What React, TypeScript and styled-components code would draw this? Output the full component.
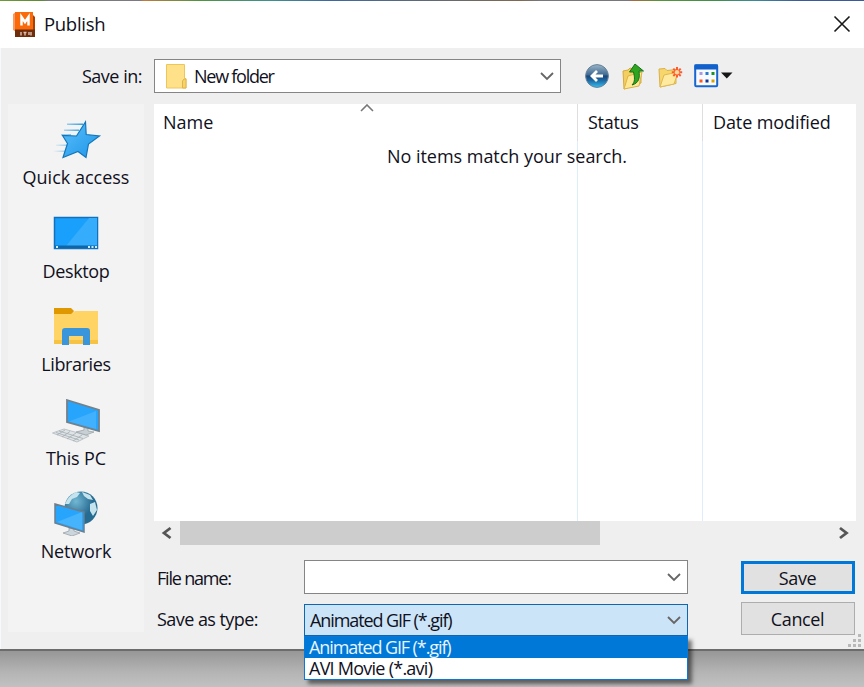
import React from "react";
import styled, { createGlobalStyle } from "styled-components";

const GlobalStyle = createGlobalStyle`
  * { box-sizing: border-box; }
  body {
    margin: 0;
    overflow: hidden;
    font-family: "Open Sans", "Noto Sans", sans-serif;
    font-size: 18px;
    color: #10101c;
  }
  button, input { font: inherit; color: inherit; }
  svg { display: block; flex: none; }
`;

const Backdrop = styled.div`
  width: 864px;
  height: 687px;
  padding-top: 1px;
  overflow: hidden;
  background:
    linear-gradient(90deg, #6f9a3a 0, #5d8a33 40px, #7c7a80 50px, #7c7a80 140px, #c07a3c 144px, #4f9440 200px, #3f9090 270px, #3d68a0 330px, #806a50 520px, #77777c 540px, #77777c 628px, #a86a3c 634px, #55943a 660px, #3f8f48 715px, #3b8a9a 755px, #3b5a9c 800px, #3b5a9c 100%) 0 0 / 100% 2px no-repeat,
    linear-gradient(180deg, #979797 651px, #b4b4b4 672px, #c1c1c1 687px);
`;

const Dialog = styled.main`
  height: 650px;
  display: flex;
  flex-direction: column;
  background: #efefef;
  border-bottom: 2px solid #6c6c6c;
  box-shadow: inset 1px 0 #f8f9fc;
`;

const TitleBar = styled.header`
  height: 47px;
  flex: none;
  display: flex;
  align-items: center;
  padding: 0 13px 2px 12px;
  background: #fff;
`;

const Label = styled.span<{ $spacing?: number }>`
  white-space: nowrap;
  line-height: 24px;
  letter-spacing: ${(p) => p.$spacing ?? 0}px;
`;

const Title = styled.h1`
  flex: 1;
  margin: 0 0 0 7px;
  font-size: 18.5px;
  font-weight: 400;
  line-height: 24px;
  letter-spacing: -0.3px;
`;

const IconButton = styled.button`
  padding: 0;
  border: 0;
  background: none;
`;

const Toolbar = styled.div`
  height: 56px;
  flex: none;
  display: flex;
  align-items: center;
  padding-left: 82px;
`;

const LookInLabel = styled.label`
  width: 72px;
  padding-bottom: 1px;
  line-height: 24px;
  white-space: nowrap;
  letter-spacing: -0.5px;
`;

const Combo = styled.div<{ $width: number; $height: number; $open?: boolean }>`
  width: ${(p) => p.$width}px;
  height: ${(p) => p.$height}px;
  display: flex;
  align-items: center;
  padding: 0 5px 0 ${(p) => (p.$open ? 5 : 10)}px;
  border: ${(p) => (p.$open ? "1.5px solid #1166b0" : "1.5px solid #858585")};
  background: ${(p) => (p.$open ? "#cce4f7" : "#fff")};
`;

const ComboText = styled.span<{ $spacing: number; $indent?: number }>`
  flex: 1;
  white-space: nowrap;
  line-height: 24px;
  padding-bottom: 1px;
  letter-spacing: ${(p) => p.$spacing}px;
  margin-left: ${(p) => p.$indent ?? 0}px;
`;

const Tools = styled.nav`
  display: flex;
  align-items: center;
  gap: 11px;
  margin-left: 23px;
`;

const Body = styled.div`
  display: flex;
  flex: 1;
  padding-left: 8px;
`;

const Places = styled.aside`
  width: 136px;
  height: 528px;
  display: flex;
  flex-direction: column;
  background: #f3f3f3;
`;

const Place = styled.div<{ $gap: number }>`
  height: 93.6px;
  flex: none;
  display: flex;
  flex-direction: column;
  align-items: center;
  justify-content: flex-end;
  gap: ${(p) => p.$gap}px;
  &:first-child { height: 85px; }
`;

const Main = styled.section`
  width: 702px;
  margin-left: 10px;
`;

const FileList = styled.div`
  position: relative;
  height: 417px;
  display: grid;
  grid-template-columns: 424px 125px 1fr;
  background: #fff;
`;

const Column = styled.div<{ $pad: number }>`
  padding: 6px 0 0 ${(p) => p.$pad}px;
  border-right: 1px solid;
  border-image: linear-gradient(180deg, #dedede 38px, #deedfa 38px) 1;
  &:last-of-type { border-right: 0; }
`;

const SortMark = styled.svg`
  position: absolute;
  left: 206px;
  top: 0;
`;

const EmptyMessage = styled.p`
  position: absolute;
  left: 0;
  right: 0;
  top: 40px;
  padding-left: 4px;
  margin: 0;
  text-align: center;
  line-height: 24px;
  letter-spacing: -0.03px;
`;

const ScrollBar = styled.div`
  height: 24px;
  display: flex;
  align-items: center;
  padding-left: 6px;
`;

const Thumb = styled.div`
  width: 420px;
  height: 24px;
  margin: 0 237px 0 6px;
  background: #cdcdcd;
`;

const Form = styled.form`
  display: grid;
  grid-template-columns: 147px 384px 167px;
  padding: 15px 0 0 3px;
`;

const Fields = styled.div`
  display: flex;
  flex-direction: column;
  gap: 10px;
`;

const Captions = styled.div`
  display: flex;
  flex-direction: column;
  gap: 17px;
  padding-top: 6px;
`;

const Buttons = styled.div`
  display: flex;
  flex-direction: column;
  gap: 8px;
  margin-left: 53px;
  padding-top: 1px;
`;

const Button = styled.button<{ $primary?: boolean }>`
  width: 114px;
  height: 33px;
  padding: 0 1px 0 0;
  line-height: 24px;
  letter-spacing: -0.4px;
  border: ${(p) => (p.$primary ? "3px solid #0078d7" : "1.5px solid #adadad")};
  background: #e1e1e1;
`;

const TypeField = styled.div`
  position: relative;
  height: 32px;
`;

const Menu = styled.ul`
  position: absolute;
  top: 32px;
  left: 0;
  width: 384px;
  height: 44px;
  margin: 0;
  padding: 0;
  list-style: none;
  border: 1px solid #0a78d4;
  background: #fff;
  box-shadow: 4px 4px 4px rgba(0, 0, 0, 0.5);
`;

const Option = styled.li<{ $selected?: boolean; $spacing: number }>`
  height: 21px;
  padding-left: 4px;
  line-height: 21px;
  white-space: nowrap;
  letter-spacing: ${(p) => p.$spacing}px;
  color: ${(p) => (p.$selected ? "#e8f4ff" : "inherit")};
  background: ${(p) => (p.$selected ? "#0078d7" : "#fff")};
`;

const Grip = styled.svg`
  position: absolute;
  left: 848px;
  top: 633px;
`;

const Chevron = () => (
  <svg width="16" height="10" viewBox="0 0 16 10">
    <path d="M2 2l6 6 6-6" fill="none" stroke="#666" strokeWidth="1.800" />
  </svg>
);

const AppIcon = () => (
  <svg width="25" height="26" viewBox="0 0 25 26">
    <path d="M1 3L4 1v20l-3-2z" fill="#f79a62" />
    <path d="M3 1h18v18H3z" fill="#fb6a08" />
    <path d="M21 4l2 2v19h-2z" fill="#a5410a" />
    <path d="M3 18.500h20V26H3z" fill="#702d0b" />
    <path d="M9.500 14.500V6l3.500 5 3.500-5v8.500" fill="none" stroke="#fff" strokeWidth="2.500" />
    <path d="M9 21v3.500M11.500 21.500h3M13 21v3.500M17 21v3M19 21v3.500" stroke="#dcc3b6" strokeWidth="1.400" />
  </svg>
);

const FolderSmall = () => (
  <svg width="22" height="27" viewBox="0 0 22 27">
    <path d="M1.500 1.500h18v14h1.500v9.500H1.500z" fill="#ffe18a" stroke="#edc65a" />
    <path d="M17.500 25v-7l1.500-2h2v9z" fill="#f7d36c" stroke="#dfb44c" />
  </svg>
);

const BackIcon = () => (
  <svg width="26" height="26" viewBox="0 0 26 26">
    <defs>
      <linearGradient id="orb" x1="0" y1="0" x2="0" y2="1">
        <stop offset="0" stopColor="#9bb4c6" />
        <stop offset="0.450" stopColor="#3f6a92" />
        <stop offset="0.500" stopColor="#1b4577" />
        <stop offset="0.700" stopColor="#1d6aa5" />
        <stop offset="1" stopColor="#35c0f0" />
      </linearGradient>
    </defs>
    <circle cx="13" cy="13" r="11.400" fill="url(#orb)" stroke="#66829a" />
    <path d="M19 13H9M13 8l-5 5 5 5" fill="none" stroke="#fff" strokeWidth="2.800" />
  </svg>
);

const UpIcon = () => (
  <svg width="25" height="27" viewBox="0 0 25 27">
    <path d="M2 8l5-1 2-2 4 1v4l7-1v11L3 26z" fill="#f3cf62" stroke="#d7aa3c" />
    <path d="M7 13l14-4-3 14L3 26z" fill="#ffe793" stroke="#dcb347" />
    <path d="M11 22c3-3 3-7 1.500-13H8.500L14 1l8.500 7H18c1 7 0 12-7 14z" fill="#2fa51f" stroke="#16701a" />
  </svg>
);

const NewFolderIcon = () => (
  <svg width="26" height="27" viewBox="0 0 26 27">
    <path d="M2 6l6-.5 2 2 9-1v14L3 24z" fill="#f7d66c" stroke="#dbb04a" />
    <path d="M7 12l14-3-4 12L3 24z" fill="#ffeaa0" stroke="#deb953" />
    <path d="M20 4v10.500M14.800 9.300h10.400M16.300 5.600l7.400 7.400M23.700 5.600L16.300 13" stroke="#ff5a28" strokeWidth="2" />
    <circle cx="20" cy="9.300" r="2.200" fill="#ffd9a0" />
  </svg>
);

const ViewIcon = () => (
  <svg width="40" height="26" viewBox="0 0 40 26">
    <rect x="1.200" y="2.200" width="22" height="21" rx="1" fill="#f7faff" stroke="#1667cf" strokeWidth="2" />
    <path d="M.5 1.500h23.500v5H.5z" fill="#1160cb" />
    <path d="M5.500 9h3v3h-3z" fill="#a99be0" />
    <path d="M11.500 9h3v3h-3z" fill="#267bd0" />
    <path d="M17.500 9h3v3h-3z" fill="#199425" />
    <path d="M5.500 16.500h3v3h-3z" fill="#ff5a1e" />
    <path d="M11.500 16.500h3v3h-3z" fill="#123594" />
    <path d="M17.500 16.500h3v3h-3z" fill="#d6a400" />
    <path d="M27 9.500h11.500l-5.700 6z" fill="#161616" />
  </svg>
);

const QuickAccessIcon = () => (
  <svg width="52" height="42" viewBox="0 0 52 42">
    <defs>
      <linearGradient id="speed">
        <stop offset="0" stopColor="#2f9fe0" stopOpacity="0" />
        <stop offset="1" stopColor="#2f9fe0" />
      </linearGradient>
      <linearGradient id="star" x1="0" y1="0" x2="1" y2="1">
        <stop offset="0" stopColor="#5cc0fb" />
        <stop offset="1" stopColor="#1c94e8" />
      </linearGradient>
    </defs>
    <path d="M17 4.500h16V6H17zM14 10.500h15V12H14zM11 15h10v1.500H11zM6 25.500h13V27H6zM3 31.500h13V33H3z" fill="url(#speed)" />
    <path d="M35.500 3l.7 12.500 13.300 1.500-11 8-2.500 13.500L28 32.500 13 38.500l4.500-14-5-8 14 .5z" fill="url(#star)" stroke="#1476ba" strokeWidth="1.200" />
  </svg>
);

const DesktopIcon = () => (
  <svg width="46" height="42" viewBox="0 0 46 42">
    <path d="M1.500 6.500h43v31h-43z" fill="#18a0fc" stroke="#1270bd" strokeWidth="1.500" />
    <path d="M13 35L36 7h8v28z" fill="#35acfc" />
    <path d="M2 34.500h42V37H2z" fill="#0e66a8" />
    <path d="M3 35h2v2H3zM35 35h2v2h-2zM38.500 35h2v2h-2zM42 35h2v2h-2z" fill="#c7edff" />
  </svg>
);

const LibrariesIcon = () => (
  <svg width="46" height="42" viewBox="0 0 46 42">
    <path d="M1 3h17l3 3-3 4H1z" fill="#df9800" />
    <path d="M1 9h17l4-3h23v33H1z" fill="#ffd364" />
    <path d="M1 35h44v4H1z" fill="#f7c344" />
    <path d="M9 40V26q0-3 3-3h22q3 0 3 3v14h-7v-9H16v9z" fill="#3a96dc" />
  </svg>
);

const ThisPcIcon = () => (
  <svg width="52" height="44" viewBox="0 0 52 44">
    <path d="M2.500 34L14 30l25 7-12 6z" fill="#dfe4e7" stroke="#bcc3c8" />
    <path d="M9 32l24 7.500M6 33.500l23 7.500M15 31L7 36M20 32.500L12 38M26 34L17 40M32 36L23 42" stroke="#a5adb3" strokeWidth=".8" />
    <path d="M34 27l4 1v4l6 1-8 3-10-3 8-2z" fill="#c8d0d5" stroke="#9ba4aa" strokeWidth=".8" />
    <path d="M17 1l32 10v21l-32-9z" fill="#27a4fb" stroke="#73818b" strokeWidth="1.800" />
    <path d="M19 22.500L46 12v18z" fill="#58bcff" opacity=".55" />
  </svg>
);

const NetworkIcon = () => (
  <svg width="46" height="46" viewBox="0 0 46 46">
    <defs>
      <radialGradient id="globe" cx=".35" cy=".3">
        <stop offset="0" stopColor="#72b7d3" />
        <stop offset="1" stopColor="#266b91" />
      </radialGradient>
    </defs>
    <circle cx="28" cy="18" r="16.500" fill="url(#globe)" />
    <path d="M12 14q3-8 11-12l4 1-3 4-5 2-3 5zM29 2l8 3 3 5-5-1-4-3zM37 14l5-2 2 8-4 6-3-5z" fill="#c5e3ed" />
    <path d="M16 38l5 1v2l6 2-8 3-9-3 6-2z" fill="#cbd5dc" stroke="#929ca4" strokeWidth=".7" />
    <path d="M2 14l29 8v20L2 33z" fill="#27a4fb" stroke="#6d7f8c" strokeWidth="1.500" />
    <path d="M4 32l25-10v18z" fill="#65c1ff" opacity=".5" />
  </svg>
);

const places = [
  { name: "Quick access", icon: <QuickAccessIcon />, spacing: 0, gap: 4 },
  { name: "Desktop", icon: <DesktopIcon />, spacing: -0.35, gap: 6 },
  { name: "Libraries", icon: <LibrariesIcon />, spacing: -0.4, gap: 5 },
  { name: "This PC", icon: <ThisPcIcon />, spacing: -0.15, gap: 3 },
  { name: "Network", icon: <NetworkIcon />, spacing: -0.15, gap: 3 },
];

export default function App() {
  return (
    <Backdrop>
      <GlobalStyle />
      <Dialog>
        <TitleBar>
          <AppIcon />
          <Title>Publish</Title>
          <IconButton aria-label="Close">
            <svg width="18" height="18" viewBox="0 0 18 18">
              <path d="M1.500 1.500l15 15M16.500 1.500l-15 15" stroke="#181818" strokeWidth="1.600" />
            </svg>
          </IconButton>
        </TitleBar>
        <Toolbar>
          <LookInLabel>Save in:</LookInLabel>
          <Combo $width={407} $height={34}>
            <FolderSmall />
            <ComboText $spacing={-1.25} $indent={7}>New folder</ComboText>
            <Chevron />
          </Combo>
          <Tools>
            <BackIcon />
            <UpIcon />
            <NewFolderIcon />
            <ViewIcon />
          </Tools>
        </Toolbar>
        <Body>
          <Places>
            {places.map((p) => (
              <Place key={p.name} $gap={p.gap}>
                {p.icon}
                <Label $spacing={p.spacing}>{p.name}</Label>
              </Place>
            ))}
          </Places>
          <Main>
            <FileList>
              <Column $pad={9}><Label $spacing={0}>Name</Label></Column>
              <Column $pad={10}><Label $spacing={-0.3}>Status</Label></Column>
              <Column $pad={10}><Label $spacing={-0.1}>Date modified</Label></Column>
              <SortMark width="14" height="8" viewBox="0 0 14 8">
                <path d="M1 7l6-6 6 6" fill="none" stroke="#777" strokeWidth="1.600" />
              </SortMark>
              <EmptyMessage>No items match your search.</EmptyMessage>
            </FileList>
            <ScrollBar>
              <svg width="14" height="14" viewBox="0 0 14 14"><path d="M10.500 2L4 7l6.500 5" fill="none" stroke="#555" strokeWidth="2.800" /></svg>
              <Thumb />
              <svg width="14" height="14" viewBox="0 0 14 14"><path d="M3 2l6.500 5L3 12" fill="none" stroke="#555" strokeWidth="2.800" /></svg>
            </ScrollBar>
            <Form onSubmit={(e) => e.preventDefault()}>
              <Captions>
                <Label $spacing={-1.2}>File name:</Label>
                <Label $spacing={-0.55}>Save as type:</Label>
              </Captions>
              <Fields>
                <Combo $width={384} $height={34}>
                  <ComboText $spacing={0} />
                  <Chevron />
                </Combo>
                <TypeField>
                  <Combo $width={384} $height={32} $open>
                    <ComboText $spacing={-1.1}>Animated GIF (*.gif)</ComboText>
                    <Chevron />
                  </Combo>
                  <Menu>
                    <Option $selected $spacing={-1.1}>Animated GIF (*.gif)</Option>
                    <Option $spacing={-0.75}>AVI Movie (*.avi)</Option>
                  </Menu>
                </TypeField>
              </Fields>
              <Buttons>
                <Button $primary type="submit">Save</Button>
                <Button type="button">Cancel</Button>
              </Buttons>
            </Form>
          </Main>
        </Body>
      </Dialog>
      <Grip width="14" height="14" viewBox="0 0 14 14">
        <path d="M10 1h3v3h-3zM5 6h3v3H5zM10 6h3v3h-3zM0 11h3v3H0zM5 11h3v3H5zM10 11h3v3h-3z" fill="#b9b9b9" />
      </Grip>
    </Backdrop>
  );
}
